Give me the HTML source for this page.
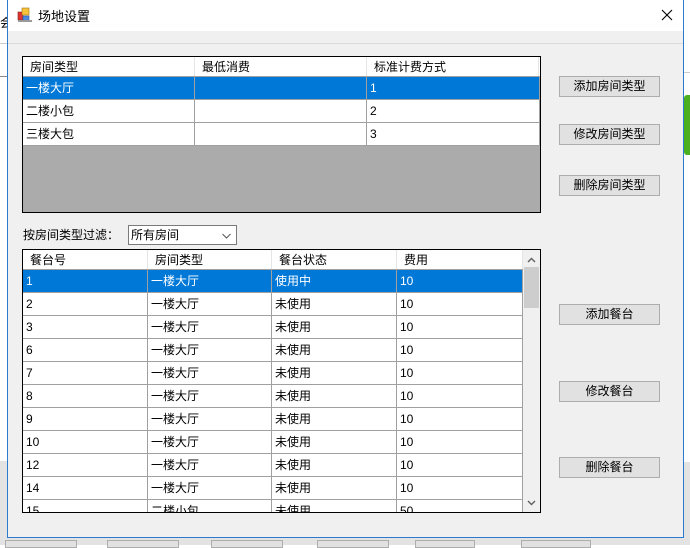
<!DOCTYPE html><html><head><meta charset="utf-8"><style>
*{margin:0;padding:0;box-sizing:border-box}
body{width:690px;height:545px;position:relative;overflow:hidden;background:#fff;font-family:"Liberation Sans","Noto Sans CJK SC",sans-serif;font-size:12px;color:#000}
.a{position:absolute}
.btn{position:absolute;background:#e1e1e1;border:1px solid #adadad;text-align:center;line-height:18px;font-size:12px}
.grid{position:absolute;border:1px solid #000;background:#ababab;overflow:hidden}
.row{position:absolute;left:0;height:23px;background:#fff;border-bottom:1px solid #a0a0a0}
.row div,.hd div{position:absolute;top:0;height:100%;border-right:1px solid #a0a0a0;padding-left:3px;line-height:22px;white-space:nowrap}
.hd{position:absolute;left:0;top:0;height:20px;background:#fff;border-bottom:1px solid #a0a0a0}
.hd div{line-height:20px;padding-left:7px;border-right-color:#e5e5e5}
.sel{background:#0078d7;color:#fff}
</style></head><body>
<div class="a" style="left:0;top:0;width:8px;height:461px;background:#fff"></div>
<div class="a" style="left:0;top:461px;width:8px;height:84px;background:#e3e3e3"></div>
<div class="a" style="left:0;top:14px;font-size:12px">会</div>
<div class="a" style="left:0;top:43px;width:8px;height:1px;background:#ccc"></div>
<div class="a" style="left:0;top:76px;width:8px;height:1px;background:#888"></div>
<div class="a" style="left:683px;top:0;width:7px;height:545px;background:#fff"></div>
<div class="a" style="left:683px;top:72px;width:7px;height:1px;background:#ccc"></div>
<div class="a" style="left:684px;top:95px;width:6px;height:60px;background:#4caf20;border-radius:3px 0 0 3px"></div>
<div class="a" style="left:683px;top:462px;width:7px;height:83px;background:#e3e3e3"></div>
<div class="a" style="left:0;top:537px;width:690px;height:8px;background:#e3e3e3"></div>
<div class="a" style="left:5px;top:540px;width:72px;height:8px;border:1px solid #adadad;background:#e1e1e1"></div>
<div class="a" style="left:107px;top:540px;width:72px;height:8px;border:1px solid #adadad;background:#e1e1e1"></div>
<div class="a" style="left:211px;top:540px;width:72px;height:8px;border:1px solid #adadad;background:#e1e1e1"></div>
<div class="a" style="left:317px;top:540px;width:72px;height:8px;border:1px solid #adadad;background:#e1e1e1"></div>
<div class="a" style="left:415px;top:540px;width:60px;height:8px;border:1px solid #adadad;background:#e1e1e1"></div>
<div class="a" style="left:521px;top:540px;width:70px;height:8px;border:1px solid #adadad;background:#e1e1e1"></div>
<!-- window -->
<div class="a" style="left:7px;top:0;width:677px;height:538px;border:1px solid #2b79d0;border-top:none;background:#f0f0f0">
 <div class="a" style="left:0;top:0;width:675px;height:31px;background:#fff"></div>
 <div class="a" style="left:0;top:43px;width:675px;height:1px;background:#dadada"></div>
 <svg class="a" style="left:9px;top:7px" width="16" height="16" viewBox="0 0 16 16"><rect x="1" y="5" width="5" height="8" fill="#d33" stroke="#822" stroke-width=".6"/><rect x="5" y="1" width="7" height="7" fill="#f5c23a" stroke="#a07010" stroke-width=".6"/><rect x="6" y="9" width="6" height="5" fill="#4a8ae0" stroke="#2a5aa0" stroke-width=".6"/><rect x="1" y="13" width="14" height="2" fill="#999"/></svg>
 <div class="a" style="left:30px;top:6px;font-size:13px">场地设置</div>
 <svg class="a" style="left:653px;top:9px" width="12" height="12"><path d="M1 1L11 11M11 1L1 11" stroke="#000" stroke-width="1.1"/></svg>
</div>
<!-- top grid -->
<div class="grid" style="left:22px;top:56px;width:519px;height:157px">
 <div class="hd" style="width:517px"><div style="left:0;width:172px">房间类型</div><div style="left:172px;width:172px">最低消费</div><div style="left:344px;width:172px">标准计费方式</div></div>
 <div class="row sel" style="top:20px;width:517px"><div style="left:0;width:172px">一楼大厅</div><div style="left:172px;width:172px"></div><div style="left:344px;width:173px">1</div></div>
 <div class="row" style="top:43px;width:517px"><div style="left:0;width:172px">二楼小包</div><div style="left:172px;width:172px"></div><div style="left:344px;width:173px">2</div></div>
 <div class="row" style="top:66px;width:517px"><div style="left:0;width:172px">三楼大包</div><div style="left:172px;width:172px"></div><div style="left:344px;width:173px">3</div></div>
</div>
<div class="btn" style="left:559px;top:76px;width:101px;height:21px">添加房间类型</div>
<div class="btn" style="left:559px;top:124px;width:101px;height:21px">修改房间类型</div>
<div class="btn" style="left:559px;top:175px;width:101px;height:21px">删除房间类型</div>
<div class="a" style="left:23px;top:226px">按房间类型过滤：</div>
<div class="a" style="left:128px;top:225px;width:109px;height:20px;border:1px solid #7a7a7a;background:#fff;padding-left:2px;line-height:18px">所有房间
 <svg class="a" style="left:93px;top:7px" width="9" height="6"><path d="M0.5 1L4.5 5L8.5 1" stroke="#555" fill="none"/></svg></div>
<!-- bottom grid -->
<div class="grid" style="left:22px;top:249px;width:519px;height:264px;background:#fff">
 <div class="hd" style="width:500px"><div style="left:0;width:125px">餐台号</div><div style="left:125px;width:124px">房间类型</div><div style="left:249px;width:125px">餐台状态</div><div style="left:374px;width:126px">费用</div></div>
 <div class="row sel" style="top:20px;width:500px"><div style="left:0;width:125px">1</div><div style="left:125px;width:124px">一楼大厅</div><div style="left:249px;width:125px">使用中</div><div style="left:374px;width:126px">10</div></div>
 <div class="row" style="top:43px;width:500px"><div style="left:0;width:125px">2</div><div style="left:125px;width:124px">一楼大厅</div><div style="left:249px;width:125px">未使用</div><div style="left:374px;width:126px">10</div></div>
 <div class="row" style="top:66px;width:500px"><div style="left:0;width:125px">3</div><div style="left:125px;width:124px">一楼大厅</div><div style="left:249px;width:125px">未使用</div><div style="left:374px;width:126px">10</div></div>
 <div class="row" style="top:89px;width:500px"><div style="left:0;width:125px">6</div><div style="left:125px;width:124px">一楼大厅</div><div style="left:249px;width:125px">未使用</div><div style="left:374px;width:126px">10</div></div>
 <div class="row" style="top:112px;width:500px"><div style="left:0;width:125px">7</div><div style="left:125px;width:124px">一楼大厅</div><div style="left:249px;width:125px">未使用</div><div style="left:374px;width:126px">10</div></div>
 <div class="row" style="top:135px;width:500px"><div style="left:0;width:125px">8</div><div style="left:125px;width:124px">一楼大厅</div><div style="left:249px;width:125px">未使用</div><div style="left:374px;width:126px">10</div></div>
 <div class="row" style="top:158px;width:500px"><div style="left:0;width:125px">9</div><div style="left:125px;width:124px">一楼大厅</div><div style="left:249px;width:125px">未使用</div><div style="left:374px;width:126px">10</div></div>
 <div class="row" style="top:181px;width:500px"><div style="left:0;width:125px">10</div><div style="left:125px;width:124px">一楼大厅</div><div style="left:249px;width:125px">未使用</div><div style="left:374px;width:126px">10</div></div>
 <div class="row" style="top:204px;width:500px"><div style="left:0;width:125px">12</div><div style="left:125px;width:124px">一楼大厅</div><div style="left:249px;width:125px">未使用</div><div style="left:374px;width:126px">10</div></div>
 <div class="row" style="top:227px;width:500px"><div style="left:0;width:125px">14</div><div style="left:125px;width:124px">一楼大厅</div><div style="left:249px;width:125px">未使用</div><div style="left:374px;width:126px">10</div></div>
 <div class="row" style="top:250px;width:500px"><div style="left:0;width:125px">15</div><div style="left:125px;width:124px">二楼小包</div><div style="left:249px;width:125px">未使用</div><div style="left:374px;width:126px">50</div></div>
 <div class="a" style="left:500px;top:0;width:17px;height:262px;background:#f0f0f0"></div>
 <div class="a" style="left:501px;top:17px;width:15px;height:41px;background:#cdcdcd"></div>
 <svg class="a" style="left:504px;top:7px" width="9" height="6"><path d="M1 5L4.5 1.5L8 5" stroke="#606060" stroke-width="1.4" fill="none"/></svg>
 <svg class="a" style="left:504px;top:250px" width="9" height="6"><path d="M1 1L4.5 4.5L8 1" stroke="#606060" stroke-width="1.4" fill="none"/></svg>
</div>
<div class="btn" style="left:559px;top:304px;width:101px;height:21px">添加餐台</div>
<div class="btn" style="left:559px;top:381px;width:101px;height:21px">修改餐台</div>
<div class="btn" style="left:559px;top:457px;width:101px;height:21px">删除餐台</div>
</body></html>
